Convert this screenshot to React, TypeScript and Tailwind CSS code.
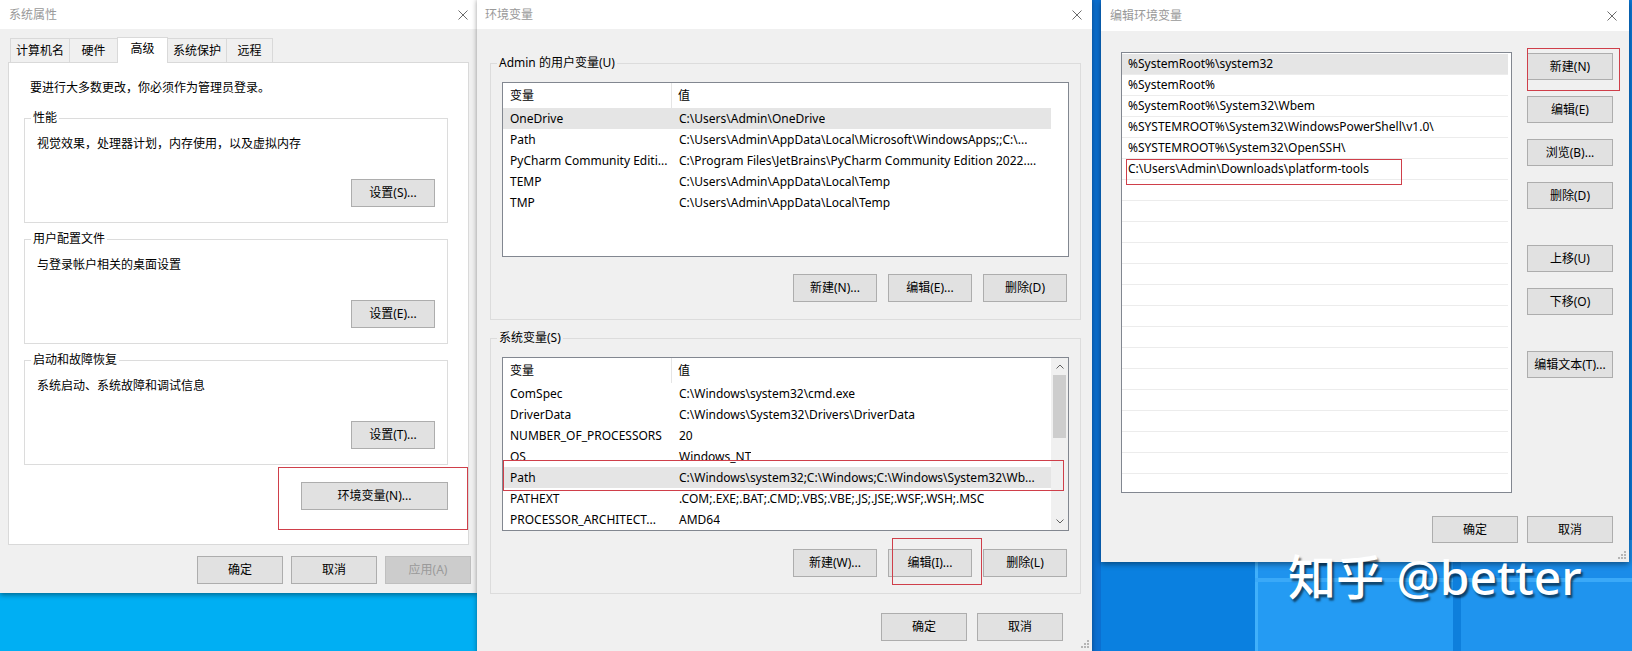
import type { ReactNode } from "react";

type Var = [string, string];

const userVars: Var[] = [
  ["OneDrive", "C:\\Users\\Admin\\OneDrive"],
  ["Path", "C:\\Users\\Admin\\AppData\\Local\\Microsoft\\WindowsApps;;C:\\..."],
  ["PyCharm Community Editi...", "C:\\Program Files\\JetBrains\\PyCharm Community Edition 2022...."],
  ["TEMP", "C:\\Users\\Admin\\AppData\\Local\\Temp"],
  ["TMP", "C:\\Users\\Admin\\AppData\\Local\\Temp"],
];

const sysVars: Var[] = [
  ["ComSpec", "C:\\Windows\\system32\\cmd.exe"],
  ["DriverData", "C:\\Windows\\System32\\Drivers\\DriverData"],
  ["NUMBER_OF_PROCESSORS", "20"],
  ["OS", "Windows_NT"],
  ["Path", "C:\\Windows\\system32;C:\\Windows;C:\\Windows\\System32\\Wb..."],
  ["PATHEXT", ".COM;.EXE;.BAT;.CMD;.VBS;.VBE;.JS;.JSE;.WSF;.WSH;.MSC"],
  ["PROCESSOR_ARCHITECT...", "AMD64"],
];

const pathEntries = [
  "%SystemRoot%\\system32",
  "%SystemRoot%",
  "%SystemRoot%\\System32\\Wbem",
  "%SYSTEMROOT%\\System32\\WindowsPowerShell\\v1.0\\",
  "%SYSTEMROOT%\\System32\\OpenSSH\\",
  "C:\\Users\\Admin\\Downloads\\platform-tools",
];

function CloseX() {
  return (
    <svg width="10" height="10" viewBox="0 0 10 10">
      <path d="M0.5 0.5L9.5 9.5M9.5 0.5L0.5 9.5" stroke="#6b6b6b" strokeWidth="1" />
    </svg>
  );
}

function Grip() {
  return (
    <svg width="10" height="10" viewBox="0 0 10 10" className="absolute bottom-[2px] right-[2px]">
      {[
        [7, 1],
        [4, 4],
        [7, 4],
        [1, 7],
        [4, 7],
        [7, 7],
      ].map(([x, y]) => (
        <rect key={`${x}-${y}`} x={x} y={y} width="2" height="2" fill="#b5b5b5" />
      ))}
    </svg>
  );
}

function Chevron({ up }: { up?: boolean }) {
  return (
    <svg width="8" height="5" viewBox="0 0 8 5">
      <path d={up ? "M0.5 4.5L4 1L7.5 4.5" : "M0.5 0.5L4 4L7.5 0.5"} stroke="#606060" strokeWidth="1" fill="none" />
    </svg>
  );
}

function Btn({ children, className = "", disabled }: { children: ReactNode; className?: string; disabled?: boolean }) {
  return (
    <button
      type="button"
      className={`flex shrink-0 items-center justify-center border text-[12px] leading-none ${
        disabled ? "border-[#bfbfbf] bg-[#cccccc] text-[#9a9a9a]" : "border-[#adadad] bg-[#e1e1e1] text-black"
      } ${className}`}
    >
      {children}
    </button>
  );
}

function PerfGroup({ label, text, btn, className }: { label: string; text: string; btn: string; className: string }) {
  return (
    <fieldset className={`ml-[15px] w-[424px] border border-[#dcdcdc] ${className}`}>
      <legend className="ml-[6px] px-[2px] text-[12px] leading-[16px]">{label}</legend>
      <p className="ml-[12px] mt-[10px] text-[12px] leading-[16px]">{text}</p>
      <div className="mt-[27px] flex justify-end pb-[15px] pr-[12px]">
        <Btn className="h-[28px] w-[84px]">{btn}</Btn>
      </div>
    </fieldset>
  );
}

function SystemProperties() {
  const tabs = [
    { label: "计算机名", w: "w-[60px]" },
    { label: "硬件", w: "w-[49px]" },
    { label: "高级", w: "w-[51px]", active: true },
    { label: "系统保护", w: "w-[60px]" },
    { label: "远程", w: "w-[47px]" },
  ];
  return (
    <div className="absolute left-0 top-0 flex h-[593px] w-[477px] flex-col bg-[#f0f0f0] shadow-[0_2px_5px_rgba(0,0,0,0.4)]">
      <div className="flex h-[29px] shrink-0 items-center justify-between bg-white pl-[9px] pr-[9px] text-[12px] text-[#999999]">
        <span>系统属性</span>
        <CloseX />
      </div>
      <div className="ml-[10px] mt-[8px] flex h-[25px] items-end">
        {tabs.map((t, i) =>
          t.active ? (
            <div
              key={t.label}
              className={`relative z-10 -mb-px -ml-px flex h-[26px] items-center justify-center border border-b-0 border-[#d9d9d9] bg-white pb-[4px] text-[12px] ${t.w}`}
            >
              {t.label}
            </div>
          ) : (
            <div
              key={t.label}
              className={`flex h-[24px] items-center justify-center border border-b-0 border-[#d9d9d9] bg-[#f0f0f0] text-[12px] ${t.w} ${i > 0 ? "-ml-px" : ""}`}
            >
              {t.label}
            </div>
          ),
        )}
      </div>
      <div className="mx-[8px] flex h-[483px] flex-col border border-[#d9d9d9] bg-white">
        <p className="ml-[21px] mt-[17px] text-[12px] leading-[16px]">要进行大多数更改，你必须作为管理员登录。</p>
        <PerfGroup className="mt-[14px]" label="性能" text="视觉效果，处理器计划，内存使用，以及虚拟内存" btn="设置(S)..." />
        <PerfGroup className="mt-[8px]" label="用户配置文件" text="与登录帐户相关的桌面设置" btn="设置(E)..." />
        <PerfGroup className="mt-[8px]" label="启动和故障恢复" text="系统启动、系统故障和调试信息" btn="设置(T)..." />
        <div className="ml-[15px] mt-[17px] flex w-[424px] justify-end">
          <Btn className="h-[28px] w-[147px]">环境变量(N)...</Btn>
        </div>
      </div>
      <div className="mt-[11px] flex justify-end gap-[8px] pr-[6px]">
        <Btn className="h-[28px] w-[86px]">确定</Btn>
        <Btn className="h-[28px] w-[86px]">取消</Btn>
        <Btn className="h-[28px] w-[86px]" disabled>
          应用(A)
        </Btn>
      </div>
    </div>
  );
}

function VarList({ rows, selected, scroll, className }: { rows: Var[]; selected: number; scroll?: boolean; className: string }) {
  return (
    <div className={`flex w-[567px] border border-[#828790] bg-white ${className}`}>
      <div className="w-[548px] overflow-hidden">
        <div className="flex h-[25px] text-[12px]">
          <div className="flex w-[169px] items-center border-r border-[#e5e5e5] pl-[7px]">变量</div>
          <div className="flex items-center pl-[6px]">值</div>
        </div>
        {rows.map(([k, v], i) => (
          <div key={k} className={`flex h-[21px] items-center text-[12px] whitespace-nowrap ${i === selected ? "bg-[#e5e5e5]" : ""}`}>
            <div className="w-[169px] shrink-0 overflow-hidden pl-[7px]">{k}</div>
            <div className="overflow-hidden pl-[7px]">{v}</div>
          </div>
        ))}
      </div>
      {scroll ? (
        <div className="flex w-[17px] flex-col bg-[#f0f0f0]">
          <div className="flex h-[17px] items-center justify-center">
            <Chevron up />
          </div>
          <div className="mx-[2px] h-[63px] bg-[#cdcdcd]" />
          <div className="flex-1" />
          <div className="flex h-[17px] items-center justify-center">
            <Chevron />
          </div>
        </div>
      ) : (
        <div className="w-[17px]" />
      )}
    </div>
  );
}

function EnvVariables() {
  return (
    <div className="absolute left-[477px] top-0 flex h-[660px] w-[615px] flex-col bg-[#f0f0f0] shadow-[0_0_5px_rgba(0,0,0,0.4)]">
      <div className="flex h-[29px] shrink-0 items-center justify-between bg-white pl-[8px] pr-[10px] text-[12px] text-[#999999]">
        <span>环境变量</span>
        <CloseX />
      </div>
      <fieldset className="ml-[13px] mt-[26px] w-[591px] border border-[#dcdcdc]">
        <legend className="ml-[6px] px-[2px] text-[12px] leading-[16px]">Admin 的用户变量(U)</legend>
        <VarList className="ml-[11px] mt-[11px] h-[175px]" rows={userVars} selected={0} />
        <div className="mt-[17px] flex justify-end gap-[11px] pb-[17px] pr-[13px]">
          <Btn className="h-[28px] w-[84px]">新建(N)...</Btn>
          <Btn className="h-[28px] w-[84px]">编辑(E)...</Btn>
          <Btn className="h-[28px] w-[84px]">删除(D)</Btn>
        </div>
      </fieldset>
      <fieldset className="ml-[13px] mt-[10px] w-[591px] border border-[#dcdcdc]">
        <legend className="ml-[6px] px-[2px] text-[12px] leading-[16px]">系统变量(S)</legend>
        <VarList className="ml-[11px] mt-[11px] h-[174px]" rows={sysVars} selected={4} scroll />
        <div className="mt-[18px] flex justify-end gap-[11px] pb-[16px] pr-[13px]">
          <Btn className="h-[28px] w-[84px]">新建(W)...</Btn>
          <Btn className="h-[28px] w-[84px]">编辑(I)...</Btn>
          <Btn className="h-[28px] w-[84px]">删除(L)</Btn>
        </div>
      </fieldset>
      <div className="mt-[19px] flex justify-end gap-[10px] pr-[29px]">
        <Btn className="h-[28px] w-[86px]">确定</Btn>
        <Btn className="h-[28px] w-[86px]">取消</Btn>
      </div>
      <div className="absolute bottom-[9px] right-0">
        <Grip />
      </div>
    </div>
  );
}

function EditEnvVariable() {
  const empty = Array.from({ length: 15 }, (_, i) => i);
  return (
    <div className="absolute left-[1101px] top-0 flex h-[562px] w-[528px] flex-col bg-[#f0f0f0] shadow-[0_2px_6px_rgba(0,0,0,0.45)]">
      <div className="flex h-[31px] shrink-0 items-center justify-between bg-white pl-[9px] pr-[12px] text-[12px] text-[#999999]">
        <span>编辑环境变量</span>
        <CloseX />
      </div>
      <div className="ml-[20px] mt-[21px] flex gap-[15px]">
        <div className="h-[441px] w-[391px] overflow-hidden border border-[#828790] bg-white pr-[3px] pt-[1px]">
          {pathEntries.map((p, i) => (
            <div
              key={p}
              className={`flex h-[21px] items-center border-b border-[#ececec] pl-[6px] text-[12px] whitespace-nowrap ${i === 0 ? "bg-[#e5e5e5]" : ""}`}
            >
              {p}
            </div>
          ))}
          {empty.map((i) => (
            <div key={i} className="h-[21px] border-b border-[#ececec]" />
          ))}
        </div>
        <div className="flex w-[86px] flex-col">
          <Btn className="mt-[1px] h-[27px] w-[86px]">新建(N)</Btn>
          <Btn className="mt-[16px] h-[27px] w-[86px]">编辑(E)</Btn>
          <Btn className="mt-[16px] h-[27px] w-[86px]">浏览(B)...</Btn>
          <Btn className="mt-[16px] h-[27px] w-[86px]">删除(D)</Btn>
          <Btn className="mt-[36px] h-[27px] w-[86px]">上移(U)</Btn>
          <Btn className="mt-[16px] h-[27px] w-[86px]">下移(O)</Btn>
          <Btn className="mt-[36px] h-[27px] w-[86px]">编辑文本(T)...</Btn>
        </div>
      </div>
      <div className="mt-[23px] flex justify-end gap-[9px] pr-[16px]">
        <Btn className="h-[27px] w-[86px]">确定</Btn>
        <Btn className="h-[27px] w-[86px]">取消</Btn>
      </div>
      <Grip />
    </div>
  );
}

function Wallpaper() {
  return (
    <svg className="absolute inset-0" width="1632" height="651" viewBox="0 0 1632 651">
      <rect width="1632" height="651" fill="#0a78d8" />
      <rect x="0" y="585" width="480" height="66" fill="#00aff3" />
      <rect x="1092" y="0" width="10" height="651" fill="#0b6fd0" />
      <rect x="1101" y="540" width="531" height="111" fill="#0a80e0" />
      <rect x="1255" y="540" width="3" height="111" fill="#40b0fb" />
      <rect x="1258" y="540" width="195" height="38" fill="#1f93ee" />
      <rect x="1258" y="582" width="195" height="69" fill="#249bf3" />
      <rect x="1255" y="578" width="377" height="4" fill="#3aa9f8" />
      <rect x="1453" y="540" width="8" height="111" fill="#0e7fdc" />
      <rect x="1461" y="540" width="171" height="38" fill="#1a8ce9" />
      <rect x="1461" y="582" width="171" height="69" fill="#1f94ee" />
    </svg>
  );
}

function RedBoxes() {
  return (
    <>
      <div className="absolute left-[278px] top-[467px] h-[63px] w-[190px] border border-[#cf3f4a]" />
      <div className="absolute left-[503px] top-[460px] h-[31px] w-[561px] border border-[#cf3f4a]" />
      <div className="absolute left-[892px] top-[538px] h-[47px] w-[90px] border border-[#cf3f4a]" />
      <div className="absolute left-[1527px] top-[48px] h-[43px] w-[93px] border border-[#cf3f4a]" />
      <div className="absolute left-[1126px] top-[159px] h-[26px] w-[276px] border border-[#cf3f4a]" />
    </>
  );
}

export default function App() {
  return (
    <div className="relative h-[651px] w-[1632px] overflow-hidden font-['Noto_Sans','Noto_Sans_CJK_SC',sans-serif] text-black">
      <Wallpaper />
      <SystemProperties />
      <EnvVariables />
      <EditEnvVariable />
      <RedBoxes />
      <div className="absolute left-[1288px] top-[553px] text-[48px] leading-none font-medium whitespace-nowrap text-white [text-shadow:2px_3px_2px_rgba(0,0,0,0.55)]">
        知乎 @better
      </div>
    </div>
  );
}
